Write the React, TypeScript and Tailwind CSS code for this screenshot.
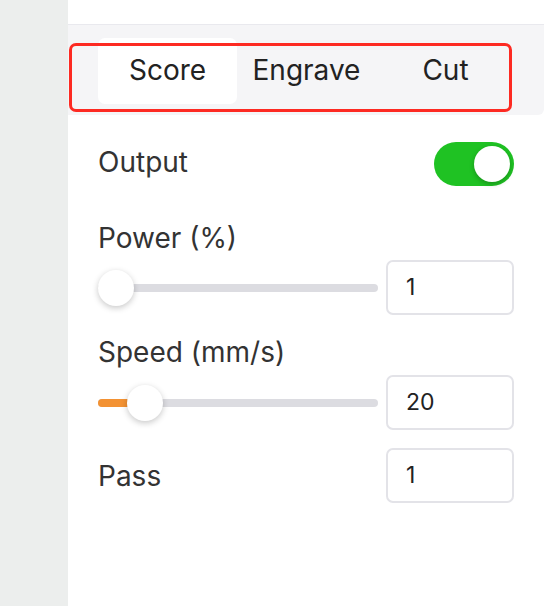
import { useState } from "react";

const TABS = ["Score", "Engrave", "Cut"];

function Slider({ pos, fill }: { pos: number; fill: boolean }) {
  // pos = thumb left offset in px inside a 280px track
  return (
    <div className="relative h-[36px] w-[280px]">
      <div className="absolute left-0 right-0 top-[14px] h-[8px] rounded-full bg-[#dcdce1]" />
      {fill ? (
        <div
          className="absolute left-0 top-[14px] h-[8px] rounded-full bg-[#f39233]"
          style={{ width: pos + 18 }}
        />
      ) : null}
      <div
        className="absolute top-0 h-[36px] w-[36px] rounded-full bg-white shadow-[0_2px_6px_rgba(0,0,0,0.22)]"
        style={{ left: pos }}
      />
    </div>
  );
}

function NumBox({ value }: { value: string }) {
  return (
    <div className="flex h-[55px] w-[128px] items-center rounded-[7px] border-2 border-[#e3e3e8] bg-white pl-[18px] text-[23px] text-[#222]">
      {value}
    </div>
  );
}

export default function App() {
  const [tab, setTab] = useState("Score");
  const [on, setOn] = useState(true);

  return (
    <div
      className="flex h-[606px] w-[544px] overflow-hidden bg-white text-[#333]"
      style={{ fontFamily: 'Inter, "Liberation Sans", Arial, sans-serif' }}
    >
      <div className="h-full w-[68px] shrink-0 bg-[#eceeed]" />
      <div className="flex flex-1 flex-col">
        <div className="h-[25px] border-b border-[#e9e9ee]" />
        <div className="relative h-[90px] rounded-br-[6px] bg-[#f5f5f7] pl-[30px] pt-[13px]">
          <div className="flex">
            {TABS.map((t) => (
              <button
                key={t}
                onClick={() => setTab(t)}
                className={`h-[66px] w-[139px] rounded-[7px] pb-[2px] text-[28px] text-[#222] ${
                  tab === t ? "bg-white" : ""
                }`}
              >
                {t}
              </button>
            ))}
          </div>
          <div className="pointer-events-none absolute left-[1px] top-[18px] h-[69px] w-[443px] rounded-[7px] border-[3px] border-[#fd2a22]" />
        </div>

        <div className="flex flex-col px-[30px] pt-[27px]">
          <div className="flex h-[44px] items-center justify-between">
            <span className="pb-[4px] text-[28px]">Output</span>
            <button
              onClick={() => setOn((v) => !v)}
              className={`flex h-[44px] w-[80px] items-center rounded-full p-[4px] ${
                on ? "justify-end bg-[#1fc223]" : "justify-start bg-[#dcdce1]"
              }`}
            >
              <span className="h-[36px] w-[36px] rounded-full bg-white shadow-[0_2px_5px_rgba(0,0,0,0.25)]" />
            </button>
          </div>

          <div className="mt-[36px] h-[32px] text-[28px] leading-[32px]">Power (%)</div>
          <div className="mt-[6px] flex h-[55px] items-center justify-between">
            <Slider pos={0} fill={false} />
            <NumBox value="1" />
          </div>

          <div className="mt-[21px] h-[32px] text-[28px] leading-[32px]">Speed (mm/s)</div>
          <div className="mt-[7px] flex h-[55px] items-center justify-between">
            <Slider pos={29} fill />
            <NumBox value="20" />
          </div>

          <div className="mt-[18px] flex h-[55px] items-center justify-between">
            <span className="text-[28px]">Pass</span>
            <NumBox value="1" />
          </div>
        </div>
      </div>
    </div>
  );
}
